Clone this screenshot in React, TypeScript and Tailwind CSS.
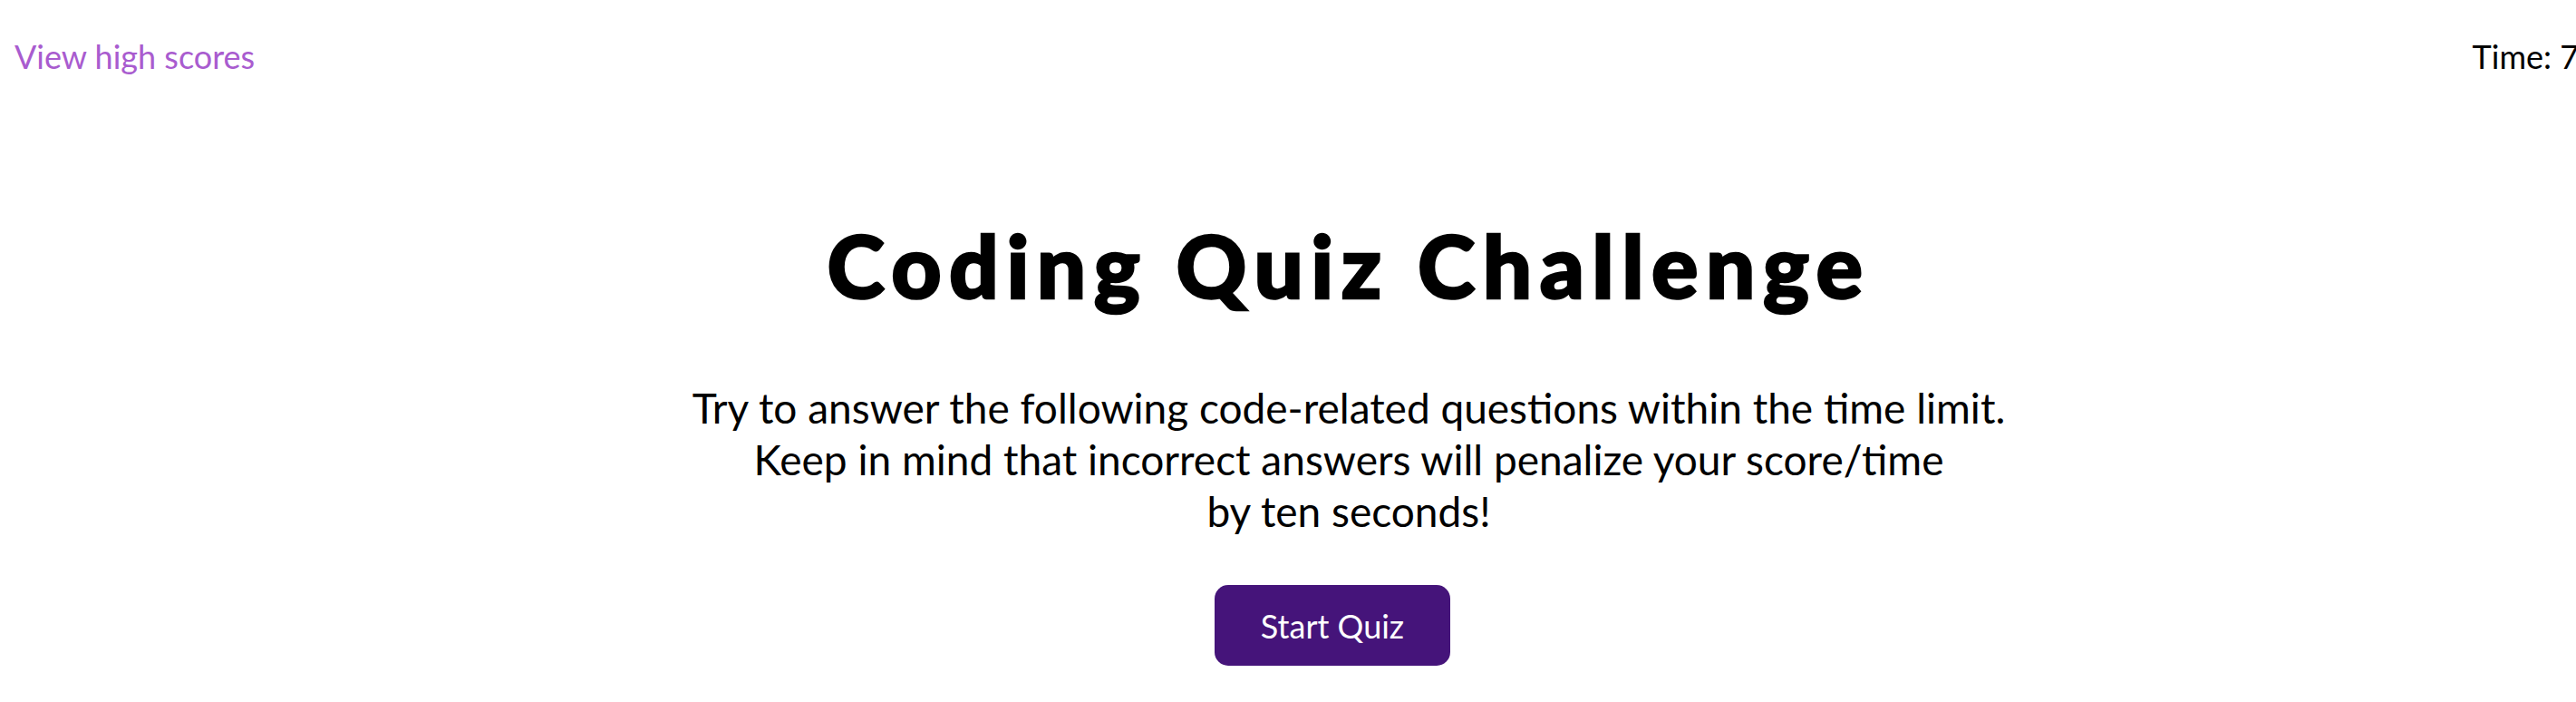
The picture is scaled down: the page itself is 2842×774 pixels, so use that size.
export default function App() {
  return (
    <div className="min-h-screen w-full overflow-hidden bg-white font-['Lato','Noto_Sans',sans-serif] text-black">
      <header className="flex items-start justify-between pl-4 pt-[36px]">
        <a href="#" className="text-[36px] leading-[52px] text-[#a95ccf]">
          View high scores
        </a>
        <div className="mr-[-24px] whitespace-nowrap text-[36px] leading-[52px]">
          Time: 75
        </div>
      </header>

      <main className="flex flex-col items-center pl-[134px] pt-[149px]">
        <h1 className="text-[96px] leading-[110px] font-black tracking-[8.5px] [-webkit-text-stroke:2.5px_black]">
          Coding Quiz Challenge
        </h1>
        <p className="mt-[74px] text-center text-[46px] leading-[57px]">
          Try to answer the following code-related questions within the time limit.
          <br />
          Keep in mind that incorrect answers will penalize your score/time
          <br />
          by ten seconds!
        </p>
        <button className="mt-[53px] mr-[36px] h-[89px] w-[260px] rounded-[15px] bg-[#45147a] text-[36px] text-white">
          Start Quiz
        </button>
      </main>
    </div>
  );
}
